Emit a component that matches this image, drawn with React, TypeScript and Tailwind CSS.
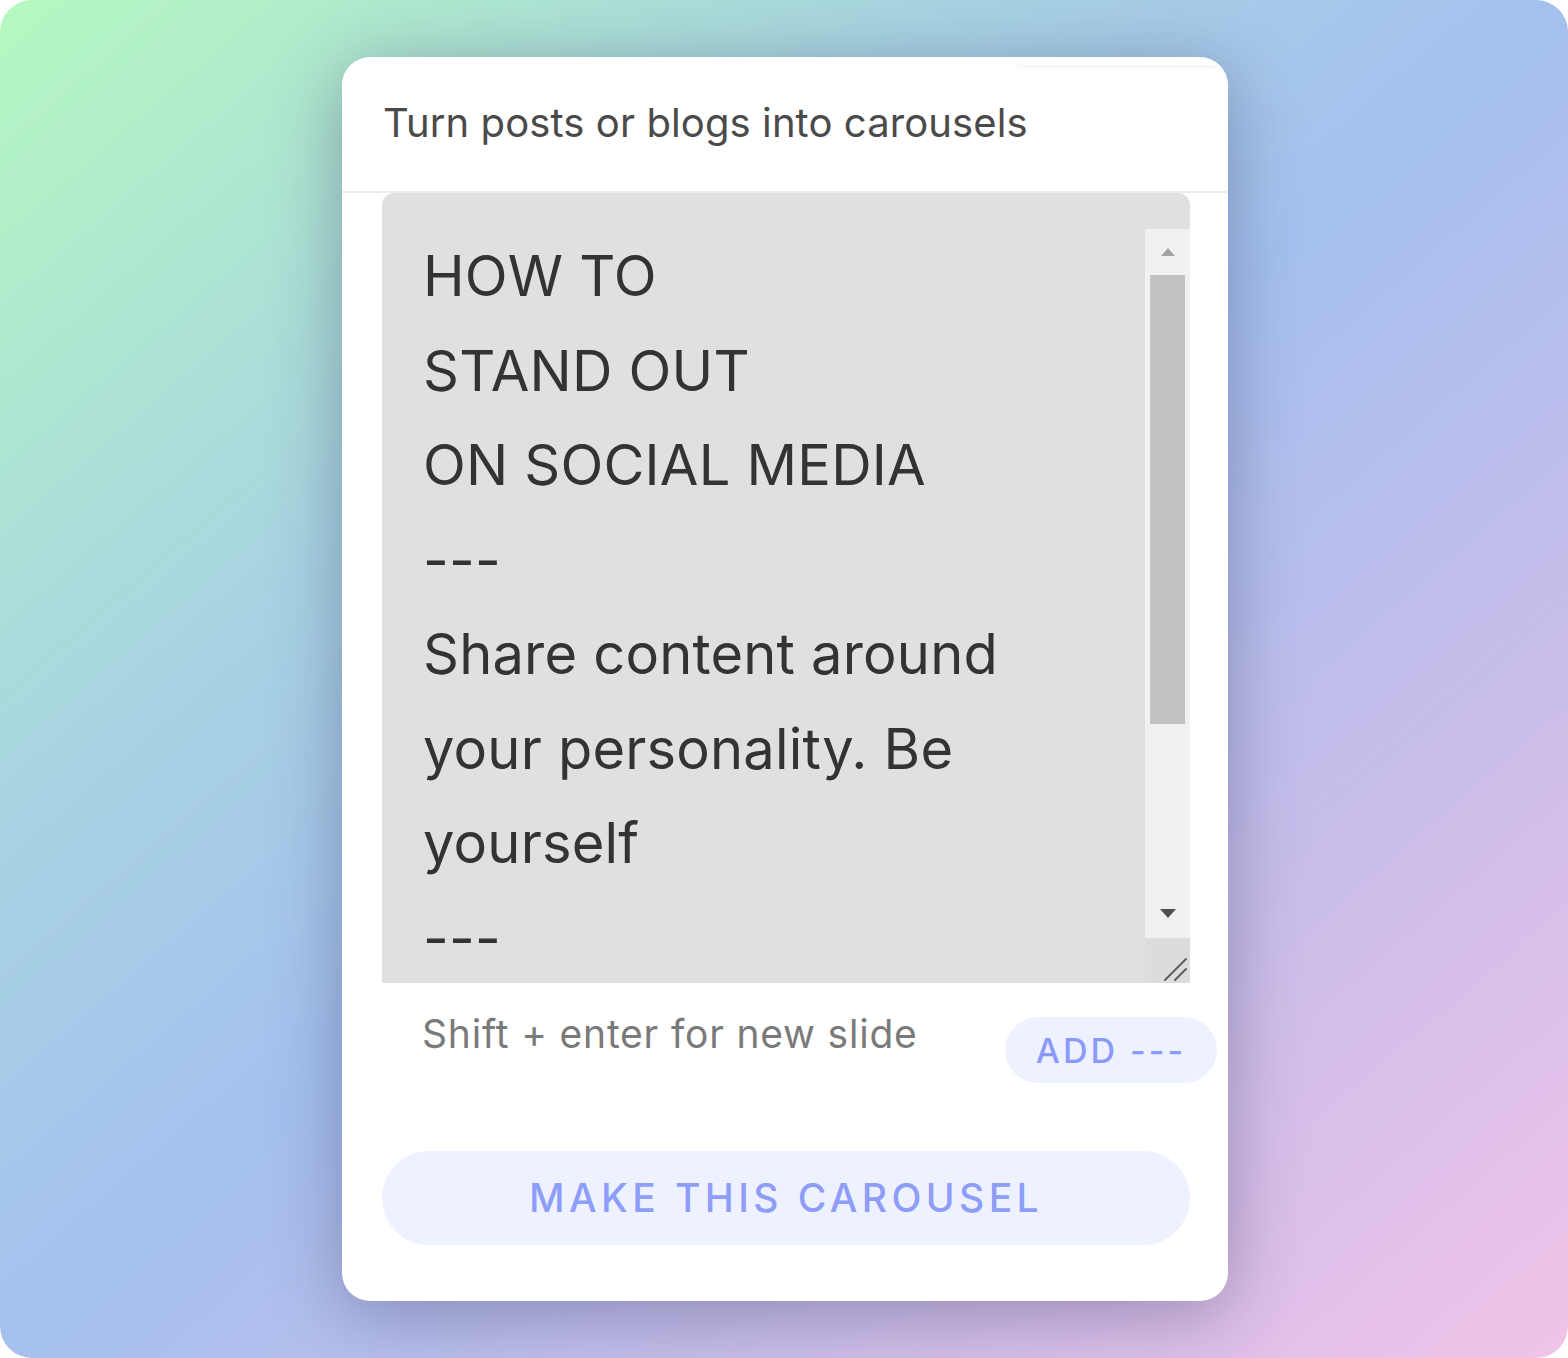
import React from "react";

const lines = [
  "HOW TO",
  "STAND OUT",
  "ON SOCIAL MEDIA",
  "---",
  "Share content around",
  "your personality. Be",
  "yourself",
  "---",
];

function FakeScrollbar() {
  return (
    <div className="flex w-[45px] shrink-0 flex-col">
      <div className="h-[36px]" />
      <div className="flex flex-1 flex-col items-center bg-[#f1f1f1]">
        <div className="flex h-[46px] w-full items-center justify-center">
          <svg width="14" height="8" viewBox="0 0 14 8">
            <path d="M7 0 L14 8 L0 8 Z" fill="#a3a3a3" />
          </svg>
        </div>
        <div className="h-[449px] w-[35px] bg-[#c1c1c1]" />
        <div className="flex-1" />
        <div className="flex h-[50px] w-full items-center justify-center">
          <svg width="16" height="9" viewBox="0 0 16 9">
            <path d="M0 0 L16 0 L8 9 Z" fill="#505050" />
          </svg>
        </div>
      </div>
      <div className="relative h-[45px] bg-[#dcdcdc]">
        <svg
          className="absolute bottom-[1px] right-[1px]"
          width="28"
          height="28"
          viewBox="0 0 28 28"
        >
          <path d="M25 5 L4 26" stroke="#5e5e5e" strokeWidth="2" strokeLinecap="round" />
          <path d="M25 15 L14 26" stroke="#5e5e5e" strokeWidth="2" strokeLinecap="round" />
        </svg>
      </div>
    </div>
  );
}

export default function App() {
  return (
    <div className="bg-white" style={{ fontFamily: "Inter, 'Noto Sans', sans-serif" }}>
      <div className="flex h-[1358px] w-full justify-center overflow-hidden rounded-[32px] bg-[linear-gradient(to_bottom_right,#b5f9c0_0%,#a8d4e2_30%,#a4c0ef_50%,#c6bdea_72%,#f1c3e8_100%)]">
        <div className="relative ml-[2px] mt-[57px] h-[1244px] w-[886px] rounded-[28px] bg-white shadow-[0_12px_70px_rgba(50,50,90,0.38)]">
          <div className="absolute right-[8px] top-0 h-[8px] w-[205px] rounded-b-[14px] shadow-[0_3px_6px_rgba(0,0,0,0.05)]" />
          <div className="flex h-[136px] items-center border-b-2 border-[#ececec] pb-[2px] pl-[41px]">
            <span className="text-[40px] tracking-[0.1px] text-[#4a4a4a]">
              Turn posts or blogs into carousels
            </span>
          </div>

          <div className="px-[40px] pr-[38px]">
            <div className="flex h-[790px] overflow-hidden rounded-t-[12px] bg-[#e0e0e0]">
              <div className="flex-1 pl-[41px] pt-[36px] text-[56px] leading-[94.5px] tracking-[0.2px] text-[#333333]">
                {lines.map((l, i) => (
                  <div key={i} className="whitespace-nowrap">
                    {l}
                  </div>
                ))}
              </div>
              <FakeScrollbar />
            </div>

            <div className="flex items-start justify-between">
              <p className="pl-[40px] pt-[22px] text-[39px] tracking-[0.8px] text-[#7a7a7a]">
                Shift + enter for new slide
              </p>
              <button className="mr-[-27px] mt-[34px] flex h-[66px] w-[212px] items-center justify-center rounded-full bg-[#eef1ff] text-[34px] font-medium tracking-[3px] text-[#8a9af8]">
                ADD ---
              </button>
            </div>

            <button className="mt-[68px] flex h-[94px] w-full items-center justify-center rounded-full bg-[#eef1ff] text-[39px] font-medium tracking-[4.4px] text-[#8d9df8]">
              MAKE THIS CAROUSEL
            </button>
          </div>
        </div>
      </div>
    </div>
  );
}
